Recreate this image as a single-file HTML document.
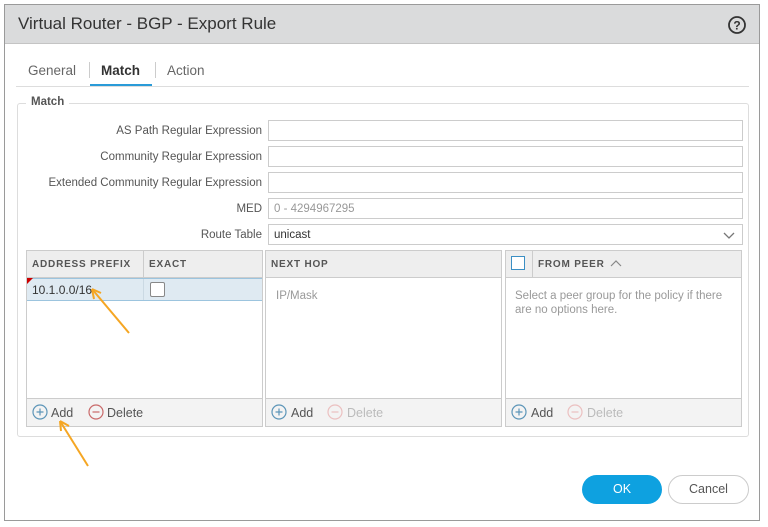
<!DOCTYPE html>
<html><head><style>
*{box-sizing:border-box;margin:0;padding:0}
body{width:768px;height:527px;background:#fff;font-family:"Liberation Sans",sans-serif;position:relative;overflow:hidden;color:#333}
.abs{position:absolute}
.dlg{left:4px;top:4px;width:756px;height:517px;border:1px solid #9a9a9a;background:#fff}
.hdr{left:5px;top:5px;width:754px;height:39px;background:#dadbdc;border-bottom:1px solid #c4c4c4}
.lbl{font-size:11.5px;color:#555;text-align:right;width:250px;left:12px}
.inp{left:268px;width:475px;height:21px;border:1px solid #ccc;background:#fff;font-size:11.5px;padding:4px 5px;color:#999}
.th{font-size:10px;font-weight:bold;letter-spacing:.8px;color:#555}
.panel{border:1px solid #ccc;background:#fff}
.phd{background:#eeeeee;border-bottom:1px solid #ccc;height:27px}
.pft{background:#f3f3f3;border-top:1px solid #ccc;height:28px}
.btxt{font-size:12.5px}
</style></head><body>
<div class="abs dlg"></div>
<div class="abs hdr"></div>
<div class="abs" style="left:18px;top:14px;font-size:17px;color:#333">Virtual Router - BGP - Export Rule</div>
<svg class="abs" style="left:727px;top:15px" width="20" height="20"><circle cx="10" cy="10" r="8" fill="none" stroke="#333" stroke-width="1.8"/><text x="10" y="14.5" font-size="12" font-weight="bold" text-anchor="middle" fill="#333" font-family="Liberation Sans">?</text></svg>

<div class="abs" style="left:28px;top:63px;font-size:13.5px;color:#666">General</div>
<div class="abs" style="left:89px;top:62px;width:1px;height:16px;background:#ccc"></div>
<div class="abs" style="left:101px;top:63px;font-size:13.5px;font-weight:bold;color:#333">Match</div>
<div class="abs" style="left:155px;top:62px;width:1px;height:16px;background:#ccc"></div>
<div class="abs" style="left:167px;top:63px;font-size:13.5px;color:#666">Action</div>
<div class="abs" style="left:16px;top:86px;width:733px;height:1px;background:#ddd"></div>
<div class="abs" style="left:90px;top:84px;width:62px;height:2px;background:#2a9bd8"></div>

<div class="abs" style="left:17px;top:103px;width:732px;height:334px;border:1px solid #ddd;border-radius:3px"></div>
<div class="abs" style="left:26px;top:96px;background:#fff;padding:0 5px;font-size:11.5px;font-weight:bold;color:#555">Match</div>

<div class="abs lbl" style="top:125px">AS Path Regular Expression</div>
<div class="abs inp" style="top:120px"></div>
<div class="abs lbl" style="top:151px">Community Regular Expression</div>
<div class="abs inp" style="top:146px"></div>
<div class="abs lbl" style="top:177px">Extended Community Regular Expression</div>
<div class="abs inp" style="top:172px"></div>
<div class="abs lbl" style="top:203px">MED</div>
<div class="abs inp" style="top:198px">0 - 4294967295</div>
<div class="abs lbl" style="top:229px">Route Table</div>
<div class="abs inp" style="top:224px;color:#333">unicast</div>
<svg class="abs" style="left:723px;top:230px" width="12" height="10"><path d="M1 3 L6 8 L11 3" fill="none" stroke="#777" stroke-width="1.3"/></svg>

<!-- panel 1 -->
<div class="abs panel" style="left:26px;top:250px;width:237px;height:177px"></div>
<div class="abs phd" style="left:27px;top:251px;width:235px"></div>
<div class="abs" style="left:143px;top:251px;width:1px;height:26px;background:#ccc"></div>
<div class="abs th" style="left:32px;top:259px">ADDRESS PREFIX</div>
<div class="abs th" style="left:149px;top:259px">EXACT</div>
<div class="abs" style="left:27px;top:278px;width:235px;height:23px;background:#dfeaf2;border-top:1px solid #9cc4de;border-bottom:1px solid #9cc4de"></div>
<div class="abs" style="left:143px;top:279px;width:1px;height:21px;background:#cbd9e3"></div>
<svg class="abs" style="left:27px;top:278px" width="6" height="6"><path d="M0 0H6L0 6Z" fill="#c00"/></svg>
<div class="abs" style="left:32px;top:283px;font-size:12px;color:#333">10.1.0.0/16</div>
<div class="abs" style="left:150px;top:282px;width:15px;height:15px;border:1.5px solid #888;border-radius:2px;background:#fff"></div>
<div class="abs pft" style="left:27px;top:398px;width:235px"></div>
<svg class="abs" style="left:32px;top:404px" width="16" height="16"><circle cx="8" cy="8" r="7" fill="none" stroke="#5c95b8" stroke-width="1.2"/><path d="M4.5 8H11.5M8 4.5V11.5" stroke="#5c95b8" stroke-width="1.2"/></svg>
<div class="abs btxt" style="left:51px;top:406px;color:#555">Add</div>
<svg class="abs" style="left:88px;top:404px" width="16" height="16"><circle cx="8" cy="8" r="7" fill="none" stroke="#c96a6a" stroke-width="1.2"/><path d="M4.5 8H11.5" stroke="#c96a6a" stroke-width="1.2"/></svg>
<div class="abs btxt" style="left:107px;top:406px;color:#555">Delete</div>

<!-- panel 2 -->
<div class="abs panel" style="left:265px;top:250px;width:237px;height:177px"></div>
<div class="abs phd" style="left:266px;top:251px;width:235px"></div>
<div class="abs th" style="left:271px;top:259px">NEXT HOP</div>
<div class="abs" style="left:276px;top:290px;font-size:11.5px;color:#999">IP/Mask</div>
<div class="abs pft" style="left:266px;top:398px;width:235px"></div>
<svg class="abs" style="left:271px;top:404px" width="16" height="16"><circle cx="8" cy="8" r="7" fill="none" stroke="#5c95b8" stroke-width="1.2"/><path d="M4.5 8H11.5M8 4.5V11.5" stroke="#5c95b8" stroke-width="1.2"/></svg>
<div class="abs btxt" style="left:291px;top:406px;color:#555">Add</div>
<svg class="abs" style="left:327px;top:404px" width="16" height="16"><circle cx="8" cy="8" r="7" fill="none" stroke="#ebc0c0" stroke-width="1.2"/><path d="M4.5 8H11.5" stroke="#ebc0c0" stroke-width="1.2"/></svg>
<div class="abs btxt" style="left:347px;top:406px;color:#bbb">Delete</div>

<!-- panel 3 -->
<div class="abs panel" style="left:505px;top:250px;width:237px;height:177px"></div>
<div class="abs phd" style="left:506px;top:251px;width:235px"></div>
<div class="abs" style="left:532px;top:251px;width:1px;height:26px;background:#ccc"></div>
<div class="abs" style="left:511px;top:256px;width:14px;height:14px;border:1.5px solid #3b8fc4;background:#fff"></div>
<div class="abs th" style="left:538px;top:259px">FROM PEER</div>
<svg class="abs" style="left:610px;top:259px" width="12" height="9"><path d="M1 7 L6 2 L11 7" fill="none" stroke="#888" stroke-width="1.2"/></svg>
<div class="abs" style="left:515px;top:289px;font-size:11.5px;color:#999;line-height:14px;width:220px">Select a peer group for the policy if there are no options here.</div>
<div class="abs pft" style="left:506px;top:398px;width:235px"></div>
<svg class="abs" style="left:511px;top:404px" width="16" height="16"><circle cx="8" cy="8" r="7" fill="none" stroke="#5c95b8" stroke-width="1.2"/><path d="M4.5 8H11.5M8 4.5V11.5" stroke="#5c95b8" stroke-width="1.2"/></svg>
<div class="abs btxt" style="left:531px;top:406px;color:#555">Add</div>
<svg class="abs" style="left:567px;top:404px" width="16" height="16"><circle cx="8" cy="8" r="7" fill="none" stroke="#ebc0c0" stroke-width="1.2"/><path d="M4.5 8H11.5" stroke="#ebc0c0" stroke-width="1.2"/></svg>
<div class="abs btxt" style="left:587px;top:406px;color:#bbb">Delete</div>

<!-- arrows -->
<svg class="abs" style="left:0;top:0" width="768" height="527">
<g stroke="#f5a623" stroke-width="2" fill="none">
<path d="M129 333 L92 289"/><path d="M92 289 L94 299 M92 289 L101 293"/>
<path d="M88 466 L60 421"/><path d="M60 421 L61 431 M60 421 L69 426"/>
</g></svg>

<!-- buttons -->
<div class="abs" style="left:582px;top:475px;width:80px;height:29px;border-radius:15px;background:#0ea1e0;color:#fff;font-size:12.5px;text-align:center;line-height:29px">OK</div>
<div class="abs" style="left:668px;top:475px;width:81px;height:29px;border-radius:15px;border:1px solid #ccc;background:#fff;color:#555;font-size:12.5px;text-align:center;line-height:27px">Cancel</div>
</body></html>
